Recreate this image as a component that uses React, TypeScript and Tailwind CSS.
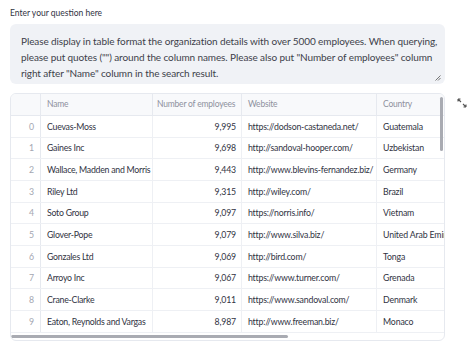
import React from "react";

const rows: [string, string, string, string][] = [
  ["Cuevas-Moss", "9,995", "https://dodson-castaneda.net/", "Guatemala"],
  ["Gaines Inc", "9,698", "http://sandoval-hooper.com/", "Uzbekistan"],
  ["Wallace, Madden and Morris", "9,443", "http://www.blevins-fernandez.biz/", "Germany"],
  ["Riley Ltd", "9,315", "http://wiley.com/", "Brazil"],
  ["Soto Group", "9,097", "https://norris.info/", "Vietnam"],
  ["Glover-Pope", "9,079", "http://www.silva.biz/", "United Arab Emirates"],
  ["Gonzales Ltd", "9,069", "http://bird.com/", "Tonga"],
  ["Arroyo Inc", "9,067", "https://www.turner.com/", "Grenada"],
  ["Crane-Clarke", "9,011", "https://www.sandoval.com/", "Denmark"],
  ["Eaton, Reynolds and Vargas", "8,987", "http://www.freeman.biz/", "Monaco"],
];

const font = { fontFamily: 'Lato, "Noto Sans", sans-serif' };

export default function App() {
  return (
    <div className="w-[474px] h-[346px] bg-white overflow-hidden relative text-[#31333f]" style={font}>
      <div className="pl-[10px] pr-[29px] pt-[6px]">
        <div className="text-[8.5px] leading-[14px] h-[18px]">Enter your question here</div>
        <div className="relative bg-[#f0f2f6] rounded-[6px] h-[60px] overflow-hidden pl-[11px] pr-[4px] pt-[9px] text-[10px] leading-[16px] tracking-[-0.1px] text-[#3d3f4a]">
          <div>Please display in table format the organization details with over 5000 employees. When querying, please put quotes ("") around the column names. Please also put "Number of employees" column right after "Name" column in the search result.</div>
          <svg className="absolute right-[4px] bottom-[3px]" width="6" height="6" viewBox="0 0 6 6">
            <path d="M5.5 0.5 L0.5 5.5 M5.5 3 L3 5.5" stroke="#555" strokeWidth="0.8" />
          </svg>
        </div>
      </div>
      <div className="flex mt-[9px] pl-[10px]">
        <div className="relative w-[435px] h-[248px] border border-[#e6e9ef] rounded-[6px] overflow-hidden text-[8.75px] tracking-[-0.15px]">
          <div className="flex h-[22px] bg-[#f8f9fb] border-b border-[#e6e9ef] text-[#8e919e] items-center text-[8.5px] tracking-[-0.2px]">
            <div className="w-[30px] shrink-0 h-full border-r border-[#e6e9ef]" />
            <div className="w-[112px] shrink-0 h-full border-r border-[#e6e9ef] flex items-center px-[6px]">Name</div>
            <div className="w-[89px] shrink-0 h-full border-r border-[#e6e9ef] flex items-center px-[4px] whitespace-nowrap overflow-hidden">Number of employees</div>
            <div className="w-[135px] shrink-0 h-full border-r border-[#e6e9ef] flex items-center px-[6px]">Website</div>
            <div className="w-[80px] shrink-0 h-full flex items-center px-[6px] whitespace-nowrap">Country</div>
          </div>
          {rows.map((r, i) => (
            <div key={i} className="flex h-[21.67px] border-b border-[#eef0f4] items-center">
              <div className="w-[30px] shrink-0 h-full border-r border-[#e6e9ef] flex items-center justify-end pr-[6px] text-[#a3a6b1]">{i}</div>
              <div className="w-[112px] shrink-0 h-full border-r border-[#eef0f4] flex items-center px-[6px] whitespace-nowrap overflow-hidden tracking-[-0.25px]">{r[0]}</div>
              <div className="w-[89px] shrink-0 h-full border-r border-[#eef0f4] flex items-center justify-end px-[5px]">{r[1]}</div>
              <div className="w-[135px] shrink-0 h-full border-r border-[#eef0f4] flex items-center px-[6px] whitespace-nowrap overflow-hidden tracking-[-0.2px]">{r[2]}</div>
              <div className="w-[80px] shrink-0 h-full flex items-center px-[6px] whitespace-nowrap overflow-hidden">{r[3]}</div>
            </div>
          ))}
          <div className="absolute right-[1px] top-[3px] w-[3px] h-[54px] rounded-full bg-[#a9abb2]" />
          <div className="absolute left-[0px] bottom-[2px] w-[277px] h-[3px] rounded-full bg-[#a9abb2]" />
        </div>
        <div className="ml-[12px] mt-[5px]">
          <svg width="10" height="10" viewBox="0 0 10 10" fill="none" stroke="#555" strokeWidth="1.1">
            <path d="M1 1 L4 4 M1 1 L1 3.5 M1 1 L3.5 1" />
            <path d="M9 9 L6 6 M9 9 L9 6.5 M9 9 L6.5 9" />
          </svg>
        </div>
      </div>
    </div>
  );
}
